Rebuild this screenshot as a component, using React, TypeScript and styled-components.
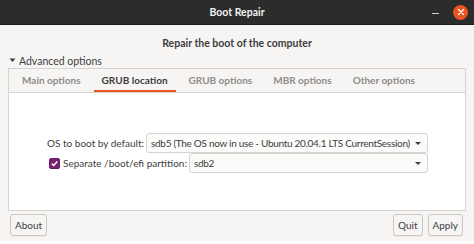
import React from 'react';
import styled, { createGlobalStyle } from 'styled-components';

const GlobalStyle = createGlobalStyle`
  html, body {
    margin: 0;
    padding: 0;
    background: #ffffff;
  }
  body {
    font-family: Lato, 'Noto Sans', sans-serif;
    font-size: 10px;
    color: #3d3d3d;
  }
`;

const tabs = ['Main options', 'GRUB location', 'GRUB options', 'MBR options', 'Other options'];

const App = () => {
  const [active, setActive] = React.useState<number>(1);
  const [separate, setSeparate] = React.useState<boolean>(true);

  return (
    <Window>
      <GlobalStyle />
      <TitleBar>
        <Title>Boot Repair</Title>
        <TitleControls>
          <Minimize />
          <CloseButton>
            <svg width="8" height="8" viewBox="0 0 8 8">
              <path d="M1.5 1.5 L6.5 6.5 M6.5 1.5 L1.5 6.5" stroke="#fff" strokeWidth="1.4" strokeLinecap="round" />
            </svg>
          </CloseButton>
        </TitleControls>
      </TitleBar>

      <Body>
        <Heading>Repair the boot of the computer</Heading>
        <Expander>
          <svg width="7" height="7" viewBox="0 0 7 7">
            <path d="M0.5 1.5 L6.5 1.5 L3.5 5 Z" fill="#3d3d3d" />
          </svg>
          Advanced options
        </Expander>

        <Notebook>
          <TabBar>
            {tabs.map((t, i) => (
              <Tab key={t} active={i === active} onClick={() => setActive(i)}>
                {t}
              </Tab>
            ))}
          </TabBar>
          <Page>
            <Row indent={38}>
              <Label>OS to boot by default:</Label>
              <Combo>
                <ComboText>sdb5 (The OS now in use - Ubuntu 20.04.1 LTS CurrentSession)</ComboText>
                <Arrow />
              </Combo>
            </Row>
            <Row indent={40}>
              <Check checked={separate} onClick={() => setSeparate(!separate)}>
                {separate && (
                  <svg width="9" height="9" viewBox="0 0 9 9">
                    <path d="M1.8 4.6 L3.7 6.5 L7.3 2.5" stroke="#fff" strokeWidth="1.5" fill="none" />
                  </svg>
                )}
              </Check>
              <Label>Separate /boot/efi partition:</Label>
              <Combo>
                <ComboText>sdb2</ComboText>
                <Arrow />
              </Combo>
            </Row>
          </Page>
        </Notebook>

        <ButtonBar>
          <Button>About</Button>
          <Spacer />
          <Button>Quit</Button>
          <Button>Apply</Button>
        </ButtonBar>
      </Body>
    </Window>
  );
};

export default App;

const Window = styled.div`
  width: 474px;
  height: 241px;
  display: flex;
  flex-direction: column;
  background: #f6f5f4;
  box-sizing: border-box;
`;

const TitleBar = styled.div`
  height: 24px;
  background: #2c2c2c;
  border-bottom: 1px solid #1f1f1f;
  position: relative;
  display: flex;
  align-items: center;
  justify-content: center;
  flex-shrink: 0;
`;

const Title = styled.div`
  color: #f0f0f0;
  font-weight: 700;
  font-size: 10.5px;
`;

const TitleControls = styled.div`
  position: absolute;
  right: 6px;
  top: 0;
  height: 24px;
  display: flex;
  align-items: center;
  gap: 14px;
`;

const Minimize = styled.div`
  width: 7px;
  height: 1px;
  background: #d0d0d0;
  margin-top: 2px;
`;

const CloseButton = styled.div`
  width: 15px;
  height: 15px;
  border-radius: 50%;
  background: #e95420;
  display: flex;
  align-items: center;
  justify-content: center;
`;

const Body = styled.div`
  flex: 1;
  display: flex;
  flex-direction: column;
  padding: 0 8px;
`;

const Heading = styled.div`
  text-align: center;
  font-weight: 700;
  font-size: 10.5px;
  margin-top: 10px;
  height: 16px;
  line-height: 16px;
`;

const Expander = styled.div`
  display: flex;
  align-items: center;
  gap: 3px;
  height: 15px;
  margin-top: 2px;
  padding-left: 1px;
  font-size: 10.5px;
`;

const Notebook = styled.div`
  border: 1px solid #d6d3d0;
  background: #ffffff;
  height: 143px;
  display: flex;
  flex-direction: column;
  box-sizing: border-box;
`;

const TabBar = styled.div`
  height: 23px;
  background: #f6f5f4;
  border-bottom: 1px solid #d6d3d0;
  display: flex;
  gap: 5px;
  padding-left: 5px;
  flex-shrink: 0;
`;

const Tab = styled.div<{ active: boolean }>`
  padding: 1px 8px 0;
  height: 100%;
  display: flex;
  align-items: center;
  box-sizing: border-box;
  white-space: nowrap;
  font-weight: 700;
  color: ${(p) => (p.active ? '#3d3d3d' : '#8f8c89')};
  border-bottom: 2px solid ${(p) => (p.active ? '#e95420' : 'transparent')};
  cursor: pointer;
`;

const Page = styled.div`
  flex: 1;
  display: flex;
  flex-direction: column;
  padding: 40px 37px 0 0;
`;

const Row = styled.div<{ indent: number }>`
  display: flex;
  align-items: center;
  height: 20px;
  padding-left: ${(p) => p.indent}px;
`;

const Label = styled.div`
  margin-right: 2px;
  white-space: nowrap;
`;

const Combo = styled.div`
  flex: 1;
  min-width: 0;
  height: 20px;
  box-sizing: border-box;
  border: 1px solid #d6d3d0;
  border-radius: 3px;
  background: #fbfbfa;
  display: flex;
  align-items: center;
  justify-content: space-between;
  padding: 0 6px 0 4px;
`;

const ComboText = styled.span`
  white-space: nowrap;
  overflow: hidden;
  letter-spacing: -0.3px;
`;

const Arrow = styled.div`
  flex-shrink: 0;
  width: 0;
  height: 0;
  margin-left: 4px;
  border-left: 3px solid transparent;
  border-right: 3px solid transparent;
  border-top: 3px solid #3d3d3d;
`;

const Check = styled.div<{ checked: boolean }>`
  width: 11px;
  height: 11px;
  border-radius: 2px;
  box-sizing: border-box;
  background: ${(p) => (p.checked ? '#77216f' : '#ffffff')};
  border: 1px solid ${(p) => (p.checked ? '#6a1d63' : '#c0bdba')};
  display: flex;
  align-items: center;
  justify-content: center;
  margin-right: 3px;
  cursor: pointer;
`;

const ButtonBar = styled.div`
  display: flex;
  align-items: center;
  gap: 5px;
  margin-top: 3px;
  padding: 0 3px 0 2px;
`;

const Spacer = styled.div`
  flex: 1;
`;

const Button = styled.button`
  font-family: inherit;
  font-size: 10px;
  color: #3d3d3d;
  height: 22px;
  padding: 0 4px;
  background: #f6f5f4;
  border: 1px solid #cdc7c2;
  border-radius: 3px;
  box-shadow: 0 1px 0 rgba(0, 0, 0, 0.04);
`;
